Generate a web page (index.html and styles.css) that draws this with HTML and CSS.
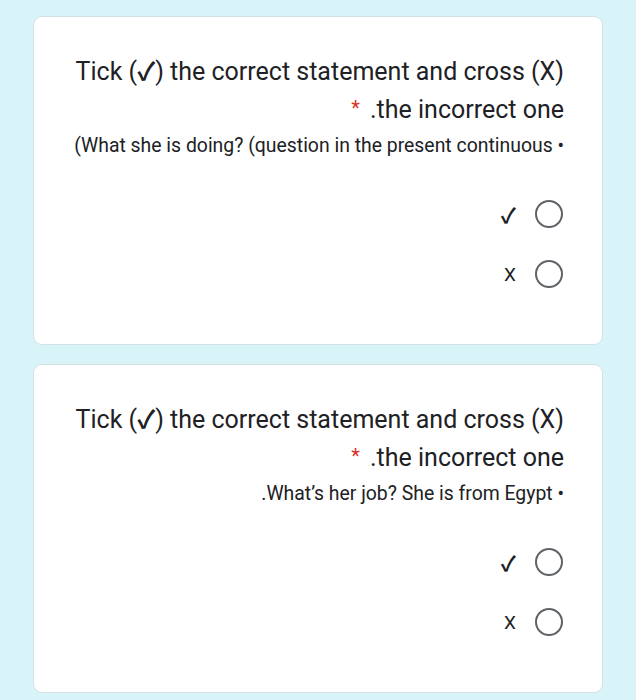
FILE: index.html
```html
<!DOCTYPE html>
<html lang="en">
<head>
    <meta charset="UTF-8">
    <meta name="viewport" content="width=device-width, initial-scale=1.0">
    <title>Tick the correct statement</title>
    <link rel="stylesheet" href="styles.css">
</head>
<body>
    <div class="form">
        <div class="question-card">
            <div class="question-title">
                Tick (<span class="tick">✓</span>) the correct statement and cross (X)<br>
                <span class="required">*</span> .the incorrect one
            </div>
            <div class="question-desc">(What she is doing? (question in the present continuous •</div>
            <div class="options">
                <label class="option">
                    <span class="option-label tick">✓</span>
                    <span class="radio"></span>
                </label>
                <label class="option">
                    <span class="option-label">X</span>
                    <span class="radio"></span>
                </label>
            </div>
        </div>

        <div class="question-card">
            <div class="question-title">
                Tick (<span class="tick">✓</span>) the correct statement and cross (X)<br>
                <span class="required">*</span> .the incorrect one
            </div>
            <div class="question-desc">.What’s her job? She is from Egypt •</div>
            <div class="options">
                <label class="option">
                    <span class="option-label tick">✓</span>
                    <span class="radio"></span>
                </label>
                <label class="option">
                    <span class="option-label">X</span>
                    <span class="radio"></span>
                </label>
            </div>
        </div>
    </div>
</body>
</html>
```

FILE: styles.css
```css
body {
    margin: 0;
    padding: 0;
    background: #d9f4f8;
    font-family: Roboto, "Liberation Sans", Arial, sans-serif;
    color: #202124;
}

.form {
    padding: 16px 33px 10px 33px;
}

.question-card {
    background: #FFFFFF;
    border: 1px solid #d3e1e4;
    border-radius: 9px;
    padding: 37px 38px 40px 38px;
    margin-bottom: 19px;
    text-align: right;
}

.question-title {
    font-size: 25px;
    line-height: 36px;
}

.question-title .tick {
    line-height: 1;
}

.tick {
    font-family: "Noto Sans CJK JP", "DejaVu Sans", sans-serif;
    font-weight: bold;
}

.required {
    color: #d93025;
    font-size: 20px;
    vertical-align: 3px;
    margin-right: 4px;
}

.question-desc {
    font-size: 19.4px;
    line-height: 24px;
    margin-top: 6px;
}

.options {
    margin-top: 26px;
    display: flex;
    flex-direction: column;
    align-items: flex-end;
}

.option {
    height: 60px;
    display: flex;
    align-items: center;
    gap: 19px;
    margin-right: 1px;
}

.option-label {
    font-size: 19px;
}

.option-label.tick {
    font-size: 21px;
    line-height: 1;
}

.radio {
    width: 24px;
    height: 24px;
    border: 2.5px solid #5f6368;
    border-radius: 50%;
    box-sizing: content-box;
}
```
